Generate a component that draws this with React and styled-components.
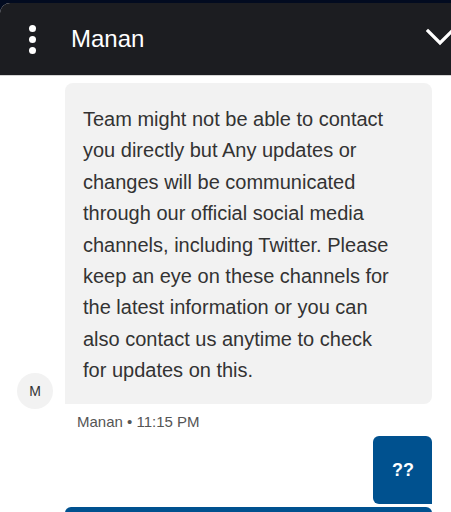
import React from 'react';
import styled, { createGlobalStyle } from 'styled-components';

const GlobalStyle = createGlobalStyle`
  html, body {
    margin: 0;
    padding: 0;
    background: #ffffff;
    overflow: hidden;
  }
  body {
    font-family: "Liberation Sans", Arial, sans-serif;
  }
`;

const Frame = styled.div`
  width: 451px;
  height: 512px;
  overflow: hidden;
  background: #020b20;
  padding-top: 3px;
  box-sizing: border-box;
`;

const Panel = styled.div`
  height: 100%;
  background: #ffffff;
  border-top-left-radius: 10px;
  overflow: hidden;
  display: flex;
  flex-direction: column;
`;

const Header = styled.header`
  height: 72px;
  flex-shrink: 0;
  background: #1c1d21;
  border-bottom: 1px solid #d4d4d4;
  display: flex;
  align-items: center;
  padding-left: 29px;
  padding-right: 0;
  color: #ffffff;
`;

const Dots = styled.div`
  display: flex;
  flex-direction: column;
  gap: 4px;
  width: 7px;
  margin-right: 35px;
  span {
    display: block;
    width: 7px;
    height: 7px;
    border-radius: 50%;
    background: #ffffff;
  }
`;

const Title = styled.h1`
  margin: 0;
  flex: 1;
  font-size: 24px;
  font-weight: 400;
  color: #ffffff;
`;

const Chevron = styled.svg`
  width: 28px;
  height: 18px;
  margin-right: -3px;
  margin-top: -5px;
  flex-shrink: 0;
`;

const Messages = styled.div`
  flex: 1;
  display: flex;
  flex-direction: column;
  padding: 7px 19px 0 17px;
`;

const Row = styled.div`
  display: flex;
  align-items: flex-end;
  gap: 12px;
`;

const Avatar = styled.div`
  width: 36px;
  height: 36px;
  border-radius: 50%;
  background: #f2f2f2;
  color: #333333;
  font-size: 14px;
  display: flex;
  align-items: center;
  justify-content: center;
  flex-shrink: 0;
  margin-bottom: -5px;
`;

const Bubble = styled.div`
  flex: 1;
  background: #f2f2f2;
  color: #333333;
  font-size: 20px;
  line-height: 31.4px;
  padding: 21px 37px 17px 18px;
  border-radius: 8px 8px 8px 0;
`;

const Meta = styled.div`
  margin: 9px 0 0 60px;
  font-size: 15px;
  color: #555555;
`;

const OwnRow = styled.div`
  display: flex;
  justify-content: flex-end;
  margin-top: 6px;
`;

const OwnBubble = styled.div`
  background: #00518f;
  color: #ffffff;
  font-size: 18px;
  font-weight: 700;
  line-height: 32px;
  padding: 18px 18px 18px 19px;
  border-radius: 6px 6px 0 6px;
`;

const NextBubble = styled.div`
  margin: 3px 0 0 48px;
  height: 40px;
  background: #00518f;
  border-radius: 6px 6px 0 0;
`;

export default function App() {
  return (
    <>
      <GlobalStyle />
      <Frame>
        <Panel>
          <Header>
            <Dots>
              <span />
              <span />
              <span />
            </Dots>
            <Title>Manan</Title>
            <Chevron viewBox="0 0 28 18" fill="none">
              <path d="M2 3 L14 15 L26 3" stroke="#ffffff" strokeWidth="3.2" strokeLinecap="square" />
            </Chevron>
          </Header>
          <Messages>
            <Row>
              <Avatar>M</Avatar>
              <Bubble>
                Team might not be able to contact you directly but Any updates or changes will be
                communicated through our official social media channels, including Twitter. Please
                keep an eye on these channels for the latest information or you can also contact us
                anytime to check for updates on this.
              </Bubble>
            </Row>
            <Meta>Manan • 11:15 PM</Meta>
            <OwnRow>
              <OwnBubble>??</OwnBubble>
            </OwnRow>
            <NextBubble />
          </Messages>
        </Panel>
      </Frame>
    </>
  );
}
